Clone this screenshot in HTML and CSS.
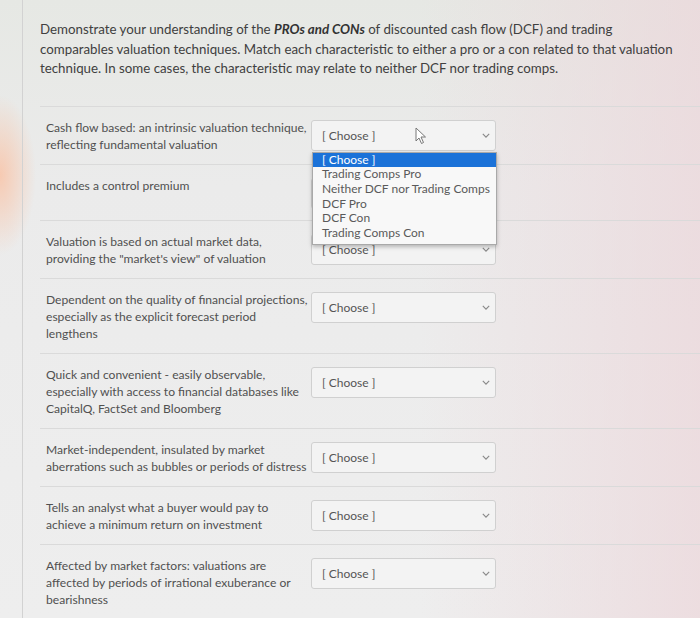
FILE: index.html
```html
<!DOCTYPE html>
<html lang="en">
<head>
<meta charset="utf-8">
<title>Matching question</title>
<link rel="stylesheet" href="styles.css">
</head>
<body>
<div class="question">
  <p class="prompt">Demonstrate your understanding of the <strong><em>PROs and CONs</em></strong> of discounted cash flow (DCF) and trading comparables valuation techniques. Match each characteristic to either a pro or a con related to that valuation technique. In some cases, the characteristic may relate to neither DCF nor trading comps.</p>
  <div class="answers">
    <div class="row">
      <div class="label">Cash flow based: an intrinsic valuation technique, reflecting fundamental valuation</div>
      <div class="select-wrap">
        <div class="select"><span>[ Choose ]</span><svg class="chev" viewBox="0 0 10 6" width="8" height="5"><path d="M1 1 L5 5 L9 1" fill="none" stroke="#888" stroke-width="1.4"/></svg></div>
        <svg class="cursor" viewBox="0 0 12 18" width="12" height="18"><path d="M1 1 L1 14 L4 11 L6.5 16.5 L8.5 15.5 L6 10 L10.5 10 Z" fill="#fff" stroke="#777" stroke-width="1" stroke-linejoin="round"/></svg>
        <ul class="dropdown">
          <li class="active">[ Choose ]</li>
          <li>Trading Comps Pro</li>
          <li>Neither DCF nor Trading Comps</li>
          <li>DCF Pro</li>
          <li>DCF Con</li>
          <li>Trading Comps Con</li>
        </ul>
      </div>
    </div>
    <div class="row">
      <div class="label">Includes a control premium</div>
      <div class="select-wrap">
        <div class="select"><span>[ Choose ]</span><svg class="chev" viewBox="0 0 10 6" width="8" height="5"><path d="M1 1 L5 5 L9 1" fill="none" stroke="#888" stroke-width="1.4"/></svg></div>
      </div>
    </div>
    <div class="row">
      <div class="label">Valuation is based on actual market data, providing the "market's view" of valuation</div>
      <div class="select-wrap">
        <div class="select"><span>[ Choose ]</span><svg class="chev" viewBox="0 0 10 6" width="8" height="5"><path d="M1 1 L5 5 L9 1" fill="none" stroke="#888" stroke-width="1.4"/></svg></div>
      </div>
    </div>
    <div class="row">
      <div class="label">Dependent on the quality of financial projections, especially as the explicit forecast period lengthens</div>
      <div class="select-wrap">
        <div class="select"><span>[ Choose ]</span><svg class="chev" viewBox="0 0 10 6" width="8" height="5"><path d="M1 1 L5 5 L9 1" fill="none" stroke="#888" stroke-width="1.4"/></svg></div>
      </div>
    </div>
    <div class="row">
      <div class="label">Quick and convenient - easily observable, especially with access to financial databases like CapitalQ, FactSet and Bloomberg</div>
      <div class="select-wrap">
        <div class="select"><span>[ Choose ]</span><svg class="chev" viewBox="0 0 10 6" width="8" height="5"><path d="M1 1 L5 5 L9 1" fill="none" stroke="#888" stroke-width="1.4"/></svg></div>
      </div>
    </div>
    <div class="row">
      <div class="label">Market-independent, insulated by market aberrations such as bubbles or periods of distress</div>
      <div class="select-wrap">
        <div class="select"><span>[ Choose ]</span><svg class="chev" viewBox="0 0 10 6" width="8" height="5"><path d="M1 1 L5 5 L9 1" fill="none" stroke="#888" stroke-width="1.4"/></svg></div>
      </div>
    </div>
    <div class="row">
      <div class="label">Tells an analyst what a buyer would pay to achieve a minimum return on investment</div>
      <div class="select-wrap">
        <div class="select"><span>[ Choose ]</span><svg class="chev" viewBox="0 0 10 6" width="8" height="5"><path d="M1 1 L5 5 L9 1" fill="none" stroke="#888" stroke-width="1.4"/></svg></div>
      </div>
    </div>
    <div class="row">
      <div class="label">Affected by market factors: valuations are affected by periods of irrational exuberance or bearishness</div>
      <div class="select-wrap">
        <div class="select"><span>[ Choose ]</span><svg class="chev" viewBox="0 0 10 6" width="8" height="5"><path d="M1 1 L5 5 L9 1" fill="none" stroke="#888" stroke-width="1.4"/></svg></div>
      </div>
    </div>
  </div>
</div>
</body>
</html>
```

FILE: styles.css
```css
html, body {
  margin: 0;
  padding: 0;
}

body {
  width: 700px;
  height: 618px;
  overflow: hidden;
  font-family: Lato, "Open Sans", "Liberation Sans", sans-serif;
  color: #4d4d4d;
  background:
    radial-gradient(ellipse 36px 80px at 0 175px, rgba(255, 180, 140, 0.6), rgba(255, 190, 150, 0) 100%),
    linear-gradient(90deg, rgba(232, 232, 232, 0) 0%, rgba(232, 232, 232, 0) 60%, rgba(236, 214, 218, 0.7) 100%),
    linear-gradient(180deg, #e6e8e4 0%, #ebebeb 30%, #eeeeee 100%);
}

.question {
  margin-left: 22px;
  border-left: 1px solid #d2d2d2;
  padding: 20px 10px 0 17px;
  min-height: 618px;
  box-sizing: border-box;
}

.prompt {
  margin: 0 0 27px;
  max-width: 646px;
  font-size: 13.3px;
  line-height: 19.5px;
  color: #404040;
}

.prompt strong {
  font-weight: 700;
  color: #333;
}

.answers {
  margin-right: -10px;
}

.row {
  display: flex;
  align-items: flex-start;
  border-top: 1px solid #dadada;
  padding: 12px 0 11px;
}

.label {
  width: 269px;
  padding-left: 6px;
  box-sizing: border-box;
  font-size: 12.1px;
  line-height: 17px;
  color: #505050;
}

.select-wrap {
  position: relative;
  margin-top: 1px;
  margin-left: 2px;
}

.select {
  width: 185px;
  height: 31px;
  box-sizing: border-box;
  border: 1px solid #d0d0d0;
  border-radius: 3px;
  background: #f3f3f3;
  display: flex;
  align-items: center;
  justify-content: space-between;
  padding: 0 5px 0 10px;
  font-size: 12px;
  color: #555;
}

.chev {
  display: block;
}

.cursor {
  position: absolute;
  left: 104px;
  top: 7px;
}

.dropdown {
  position: absolute;
  left: 1px;
  top: 32px;
  width: 185px;
  box-sizing: border-box;
  margin: 0;
  padding: 0 0 3px;
  list-style: none;
  background: #f8f8f8;
  border: 1px solid #a9a9a9;
  box-shadow: 0 2px 4px rgba(0, 0, 0, 0.25);
  font-size: 12px;
  line-height: 14.7px;
  color: #5a5a5a;
  z-index: 2;
}

.dropdown li {
  padding-left: 9px;
  white-space: nowrap;
}

.dropdown li.active {
  background: #1b72d8;
  color: #fff;
}
```
